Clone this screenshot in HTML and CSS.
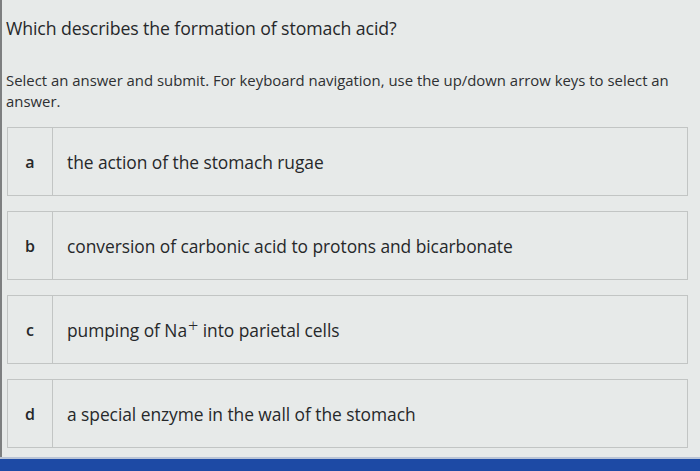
FILE: index.html
```html
<!DOCTYPE html>
<html lang="en">
<head>
    <meta charset="UTF-8">
    <meta name="viewport" content="width=device-width, initial-scale=1.0">
    <title>Question</title>
    <link rel="stylesheet" href="styles.css">
</head>
<body>
    <div class="page">
        <h1 class="question">Which describes the formation of stomach acid?</h1>

        <p class="hint">Select an answer and submit. For keyboard navigation, use the up/down arrow keys to select an answer.</p>

        <!-- Answer choices -->
        <div class="choices" role="radiogroup">
            <div class="choice" role="radio">
                <span class="letter">a</span>
                <span class="text">the action of the stomach rugae</span>
            </div>
            <div class="choice" role="radio">
                <span class="letter">b</span>
                <span class="text">conversion of carbonic acid to protons and bicarbonate</span>
            </div>
            <div class="choice" role="radio">
                <span class="letter">c</span>
                <span class="text">pumping of Na<span class="charge">+</span> into parietal cells</span>
            </div>
            <div class="choice" role="radio">
                <span class="letter">d</span>
                <span class="text">a special enzyme in the wall of the stomach</span>
            </div>
        </div>
    </div>
    <div class="toolbar"></div>
</body>
</html>
```

FILE: styles.css
```css
html, body {
    margin: 0;
    height: 100%;
}
body {
    font-family: "Open Sans", "Noto Sans", sans-serif;
    background-color: #e7eae9;
    color: #26282a;
    display: flex;
    flex-direction: column;
    overflow: hidden;
}
.page {
    flex: 1;
    border-left: 2px solid #7d7f80;
    padding: 0 12px 0 4px;
}
.question {
    font-size: 17.7px;
    font-weight: 400;
    margin: 16px 0 0 0;
    line-height: 24px;
    letter-spacing: -0.1px;
}
.hint {
    font-size: 14.9px;
    line-height: 21px;
    margin: 30px 0 0 0;
    color: #2e3032;
}
.choices {
    display: flex;
    flex-direction: column;
    gap: 15px;
    margin-top: 15px;
}
.choice {
    display: flex;
    align-items: center;
    height: 67px;
    border: 1px solid #c2c5c4;
    margin-left: 1px;
}
.choice .letter {
    align-self: stretch;
    width: 44px;
    border-right: 1px solid #c2c5c4;
    display: flex;
    align-items: center;
    justify-content: center;
    font-size: 16px;
    font-weight: 600;
}
.choice .text {
    padding-left: 14px;
    font-size: 17.4px;
    letter-spacing: -0.05px;
}
.choice .charge {
    font-size: 18px;
    font-weight: 300;
    line-height: 0;
    vertical-align: 5px;
    margin-left: 1px;
}
.toolbar {
    height: 12px;
    background-color: #1d4aa5;
    border-top: 2px solid #b9c4d6;
}
```
